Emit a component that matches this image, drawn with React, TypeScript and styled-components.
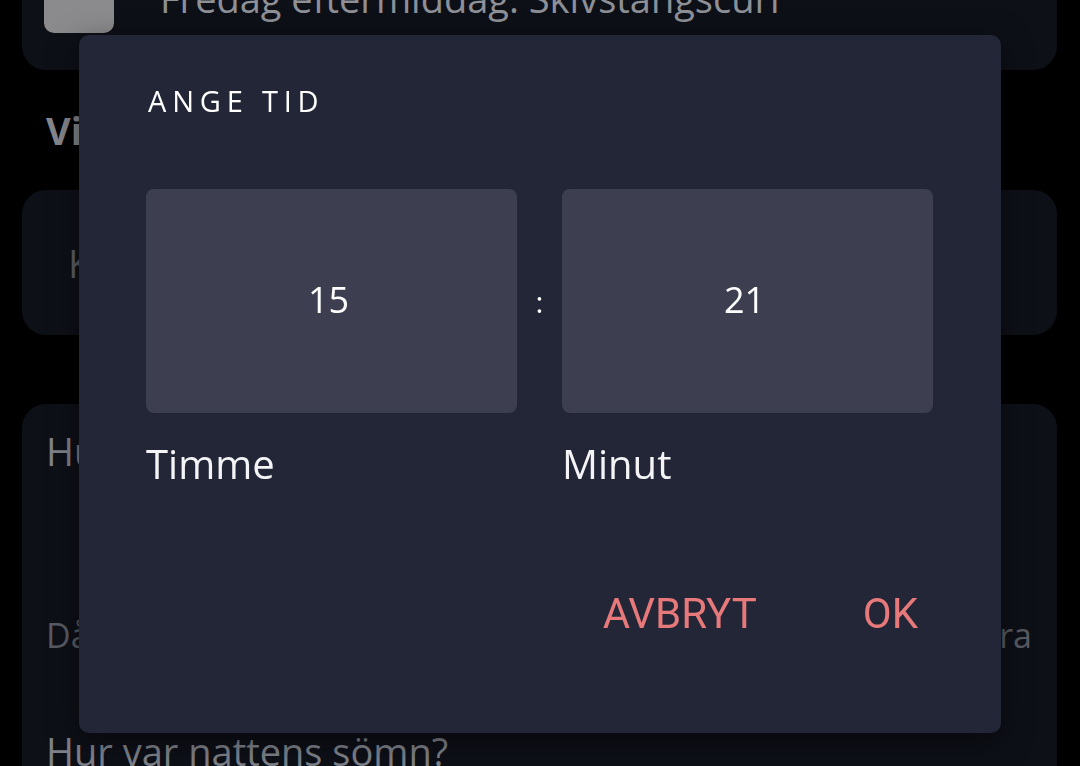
import styled, { createGlobalStyle } from "styled-components";

const GlobalStyle = createGlobalStyle`
    html, body {
        margin: 0;
        padding: 0;
        background: #000;
        overflow: hidden;
        font-family: "Open Sans", "Noto Sans", sans-serif;
    }
    * { box-sizing: border-box; }
`;

const Page = styled.div`
    display: flex;
    flex-direction: column;
    padding: 0 23px 0 22px;
    margin-top: -50px;
    color: #8a8c93;
`;

const Card = styled.div<{ $height?: number }>`
    background: #0e1018;
    border-radius: 24px;
    height: ${(p) => (p.$height ? `${p.$height}px` : "auto")};
`;

const TaskCard = styled(Card)`
    display: flex;
    align-items: flex-end;
    padding: 0 22px 37px;
`;

const TaskRow = styled.div`
    display: flex;
    align-items: center;
    gap: 46px;
`;

const Checkbox = styled.div`
    width: 70px;
    height: 70px;
    border-radius: 10px;
    background: #8b8b8d;
`;

const TaskText = styled.span`
    font-size: 38px;
    line-height: 52px;
    color: #8e9097;
    white-space: nowrap;
`;

const SectionTitle = styled.h2`
    margin: 34px 0 34px 24px;
    font-size: 38px;
    line-height: 52px;
    font-weight: 700;
    color: #85878d;
`;

const InputCard = styled(Card)`
    display: flex;
    align-items: center;
    padding: 0 46px;
    font-size: 38px;
    color: #5b5e66;
`;

const QuestionCard = styled(Card)`
    margin-top: 69px;
    padding: 22px 25px 40px 24px;
`;

const Question = styled.div<{ $size: number }>`
    font-size: ${(p) => p.$size}px;
    line-height: 1.36;
    color: #7f828a;
`;

const SliderArea = styled.div`
    height: 134px;
`;

const ScaleRow = styled.div`
    display: flex;
    justify-content: space-between;
    font-size: 34px;
    line-height: 46px;
    color: #585b63;
    margin-bottom: 68px;
`;

const Overlay = styled.div`
    position: fixed;
    inset: 0;
    display: flex;
    align-items: center;
    justify-content: center;
    padding-top: 2px;
`;

const Dialog = styled.div`
    width: 922px;
    height: 698px;
    background: #222636;
    border-radius: 10px;
    padding: 47px 68px 0 67px;
    box-shadow: 0 8px 30px rgba(0, 0, 0, 0.5);
    display: flex;
    flex-direction: column;
`;

const DialogTitle = styled.div`
    font-size: 29px;
    line-height: 38px;
    letter-spacing: 0.2em;
    color: #fff;
    padding-left: 2px;
`;

const TimeRow = styled.div`
    display: flex;
    margin-top: 69px;
`;

const Field = styled.div`
    width: 371px;
    display: flex;
    flex-direction: column;
`;

const ValueBox = styled.div`
    height: 224px;
    border-radius: 8px;
    background: #3d3f50;
    display: flex;
    align-items: center;
    justify-content: center;
    padding: 0 6px 4px 0;
    font-size: 36px;
    color: #fff;
`;

const Colon = styled.div`
    width: 45px;
    height: 224px;
    display: flex;
    align-items: center;
    justify-content: center;
    font-size: 30px;
    color: #fff;
`;

const FieldLabel = styled.div`
    margin-top: 24px;
    font-size: 40px;
    line-height: 54px;
    color: #f4f4f6;
`;

const Actions = styled.div`
    display: flex;
    justify-content: flex-end;
    gap: 76px;
    margin-top: 98px;
`;

const ActionButton = styled.button`
    background: none;
    border: none;
    padding: 0 15px;
    font-family: Roboto, "Liberation Sans", sans-serif;
    font-size: 42px;
    line-height: 50px;
    color: #e8797b;
    cursor: pointer;
`;

export default function App() {
    return (
        <>
            <GlobalStyle />
            <Page>
                <TaskCard $height={120}>
                    <TaskRow>
                        <Checkbox />
                        <TaskText>Fredag eftermiddag: Skivstångscurl</TaskText>
                    </TaskRow>
                </TaskCard>
                <SectionTitle>Vikt</SectionTitle>
                <InputCard $height={145}>Kroppsvikt (kg)</InputCard>
                <QuestionCard>
                    <Question $size={38}>Hur mår du idag?</Question>
                    <SliderArea />
                    <ScaleRow>
                        <span>Dålig</span>
                        <span>Bra</span>
                    </ScaleRow>
                    <Question $size={38}>Hur var nattens sömn?</Question>
                </QuestionCard>
            </Page>
            <Overlay>
                <Dialog>
                    <DialogTitle>ANGE TID</DialogTitle>
                    <TimeRow>
                        <Field>
                            <ValueBox>15</ValueBox>
                            <FieldLabel>Timme</FieldLabel>
                        </Field>
                        <Colon>:</Colon>
                        <Field>
                            <ValueBox>21</ValueBox>
                            <FieldLabel>Minut</FieldLabel>
                        </Field>
                    </TimeRow>
                    <Actions>
                        <ActionButton>AVBRYT</ActionButton>
                        <ActionButton>OK</ActionButton>
                    </Actions>
                </Dialog>
            </Overlay>
        </>
    );
}
